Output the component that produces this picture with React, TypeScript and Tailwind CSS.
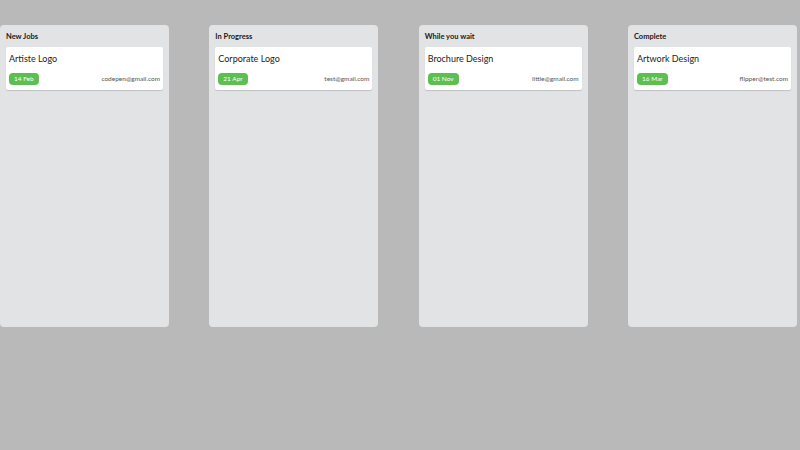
import React from "react";

const columns = [
  { title: "New Jobs", card: { name: "Artiste Logo", date: "14 Feb", email: "codepen@gmail.com" } },
  { title: "In Progress", card: { name: "Corporate Logo", date: "21 Apr", email: "test@gmail.com" } },
  { title: "While you wait", card: { name: "Brochure Design", date: "01 Nov", email: "little@gmail.com" } },
  { title: "Complete", card: { name: "Artwork Design", date: "16 Mar", email: "flipper@test.com" } },
];

export default function App() {
  return (
    <div className="w-[800px] h-[450px] bg-[#b9b9b9] pt-[25px] pr-[3px] font-['Lato',sans-serif] overflow-hidden">
      <div className="flex justify-between">
        {columns.map((c) => (
          <div key={c.title} className="w-[169px] h-[302px] bg-[#e2e3e5] rounded-[4px] px-[6px]">
            <div className="h-[22px] flex items-center pt-px text-[7.5px] font-bold text-[#1a1a1a]">{c.title}</div>
            <div className="bg-white rounded-[2px] shadow-[0_1px_1px_rgba(0,0,0,0.15)] h-[43px] pl-[3px] pr-[3px] pt-[6px]">
              <div className="text-[9px] text-[#222] leading-[12px]">{c.card.name}</div>
              <div className="flex justify-between items-center mt-[8px]">
                <span className="bg-[#5cbf4f] text-white text-[6.5px] rounded-[4px] h-[12px] px-[5px] flex items-center">{c.card.date}</span>
                <span className="text-[6.5px] text-[#555]">{c.card.email}</span>
              </div>
            </div>
          </div>
        ))}
      </div>
    </div>
  );
}
